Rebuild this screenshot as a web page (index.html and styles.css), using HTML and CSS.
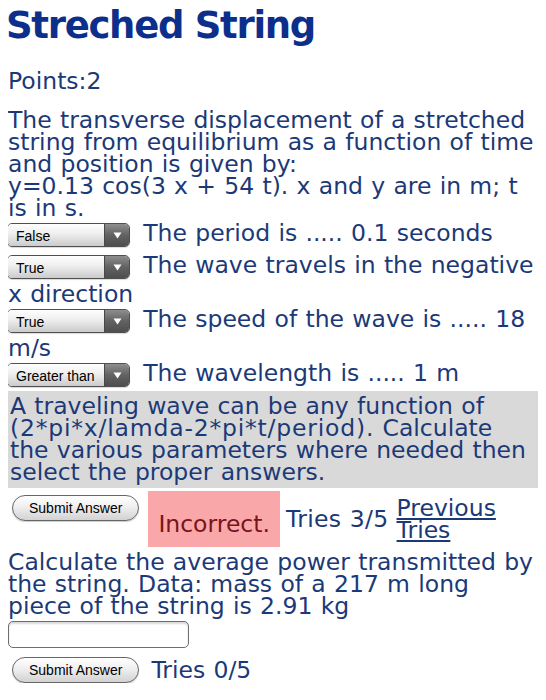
FILE: index.html
```html
<!DOCTYPE html>
<html>
<head>
<meta charset="utf-8">
<title>Streched String</title>
<link rel="stylesheet" href="styles.css">
</head>
<body>
<h1 class="title">Streched String</h1>
<div class="points">Points:2</div>
<div class="question">The transverse displacement of a stretched string from equilibrium as a function of time and position is given by:<br>y=0.13 cos(3 x + 54 t). x and y are in m; t is in s.</div>

<div class="item"><span class="sel"><span class="sel-label">False</span><span class="sel-arrow"><svg width="9" height="7" viewBox="0 0 9 7"><path d="M0.5 0.5 H8.5 L4.5 6.5 Z" fill="#fff"/></svg></span></span> The period is ..... 0.1 seconds</div>
<div class="item"><span class="sel"><span class="sel-label">True</span><span class="sel-arrow"><svg width="9" height="7" viewBox="0 0 9 7"><path d="M0.5 0.5 H8.5 L4.5 6.5 Z" fill="#fff"/></svg></span></span> The wave travels in the negative x direction</div>
<div class="item"><span class="sel"><span class="sel-label">True</span><span class="sel-arrow"><svg width="9" height="7" viewBox="0 0 9 7"><path d="M0.5 0.5 H8.5 L4.5 6.5 Z" fill="#fff"/></svg></span></span> The speed of the wave is ..... 18 m/s</div>
<div class="item"><span class="sel"><span class="sel-label">Greater than</span><span class="sel-arrow"><svg width="9" height="7" viewBox="0 0 9 7"><path d="M0.5 0.5 H8.5 L4.5 6.5 Z" fill="#fff"/></svg></span></span> The wavelength is ..... 1 m</div>

<div class="hint">A traveling wave can be any function of <span class="formula">(2*pi*x/lamda-2*pi*t/period).</span> Calculate the various parameters where needed then select the proper answers.</div>

<div class="result">
  <button class="btn btn-top" type="button">Submit Answer</button>
  <div class="incorrect">Incorrect.</div>
  <div class="tries">Tries 3/5</div>
  <div class="prev"><a href="#" class="prev-link">Previous Tries</a></div>
</div>

<div class="question2">Calculate the average power transmitted by the string. Data: mass of a 217 m long piece of the string is 2.91 kg</div>
<input class="answer" type="text">
<div class="result2">
  <button class="btn" type="button">Submit Answer</button>
  <div class="tries2">Tries 0/5</div>
</div>
</body>
</html>
```
FILE: styles.css
```css
html, body {
  background: #ffffff;
}
body {
  margin: 8px;
  font-family: "DejaVu Sans", Verdana, sans-serif;
  font-size: 23.5px;
  line-height: 22px;
  word-spacing: 0.8px;
  color: #1c3977;
}
.title {
  margin: 0 0 0 -2px;
  font-size: 37px;
  line-height: 36px;
  font-weight: bold;
  letter-spacing: -1.3px;
  word-spacing: 0;
  color: #0d2f8c;
}
.points {
  margin-top: 26px;
}
.question {
  margin-top: 17px;
}
.item {
  margin: 0;
}
.sel {
  display: inline-flex;
  box-sizing: border-box;
  width: 123px;
  height: 24px;
  margin: 4px 5px 4px -1px;
  border: 1px solid #505050;
  border-radius: 5px;
  overflow: hidden;
  vertical-align: baseline;
  font-family: "Liberation Sans", Arial, sans-serif;
  font-size: 14px;
  line-height: 22px;
  word-spacing: 0;
  color: #000;
  box-shadow: 0 1px 1px rgba(0,0,0,0.15);
}
.sel-label {
  flex: 1;
  padding: 1px 0 0 8px;
  white-space: nowrap;
  background: linear-gradient(#fefefe, #eeeeee 45%, #cbcbcb);
}
.sel-arrow {
  width: 24px;
  display: flex;
  align-items: center;
  justify-content: center;
  border-left: 1px solid #484848;
  background: linear-gradient(#8e8e8e, #626262 50%, #4e4e4e);
}
.hint {
  margin: 0 -1px;
  padding: 4px 3px 5px 3px;
  background: #d9d9d9;
}
.formula {
  letter-spacing: 0.8px;
}
.result {
  display: flex;
  align-items: center;
  margin-top: 3px;
}
.btn {
  box-sizing: border-box;
  height: 26px;
  padding: 0 16px;
  border: 1px solid #666;
  border-radius: 13px;
  background: linear-gradient(#ffffff, #efefef 45%, #d2d2d2);
  font-family: "Liberation Sans", Arial, sans-serif;
  font-size: 14px;
  color: #000;
  margin: 0 0 0 4px;
  box-shadow: 0 1px 1px rgba(0,0,0,0.2);
}
.btn-top {
  align-self: flex-start;
  margin-top: 4px;
  margin-right: 9px;
}
.incorrect {
  box-sizing: border-box;
  height: 56px;
  padding: 9px 10px 0 10px;
  display: flex;
  align-items: center;
  background: #f9a7a9;
  color: #78141a;
}
.tries {
  margin-left: 6px;
  white-space: nowrap;
  letter-spacing: 0.3px;
}
.prev {
  flex: 1;
  min-width: 0;
  margin-left: 8px;
}
.prev-link {
  color: #1c3977;
  text-decoration: underline;
}
.question2 {
  margin-top: 4px;
}
.answer {
  display: block;
  box-sizing: border-box;
  width: 181px;
  height: 27px;
  margin: 4px 0 0 0;
  border: 1px solid #6e6e6e;
  border-radius: 5px;
  background: #fff;
  box-shadow: inset 0 2px 2px rgba(0,0,0,0.15);
}
.result2 {
  display: flex;
  align-items: center;
  margin-top: 9px;
}
.tries2 {
  margin-left: 12px;
}
```
